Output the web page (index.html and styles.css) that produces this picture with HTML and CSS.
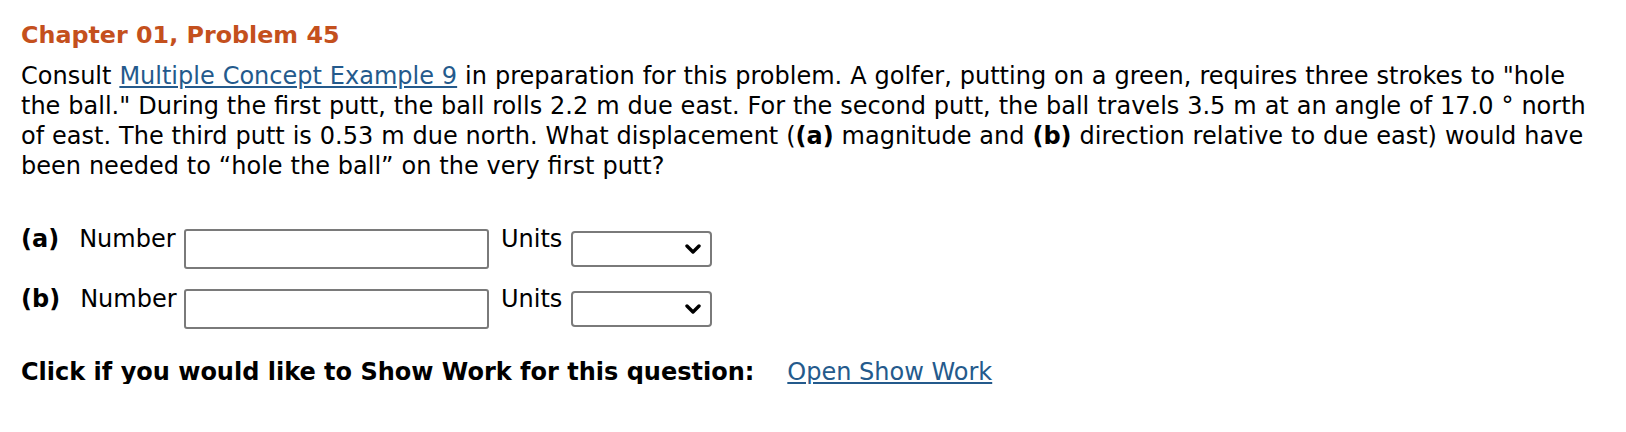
FILE: index.html
```html
<!DOCTYPE html>
<html>
<head>
<meta charset="utf-8">
<link rel="stylesheet" href="styles.css">
</head>
<body>
<div class="page">
  <h1 class="title">Chapter 01, Problem 45</h1>
  <p class="question">Consult <a class="link" href="#">Multiple Concept Example 9</a> in preparation for this problem. A golfer, putting on a green, requires three strokes to "hole the ball." During the first putt, the ball rolls 2.2 m due east. For the second putt, the ball travels 3.5 m at an angle of 17.0 ° north of east. The third putt is 0.53 m due north. What displacement (<b>(a)</b> magnitude and <b>(b)</b> direction relative to due east) would have been needed to “hole the ball” on the very first putt?</p>
  <div class="answers">
    <div class="row">
      <span class="label"><b>(a)</b><span class="word">Number</span></span>
      <span class="input"></span>
      <span class="units">Units</span>
      <span class="select"><svg class="chev" viewBox="0 0 16 10" width="16" height="10"><path d="M2 2 L8 8 L14 2" fill="none" stroke="#000" stroke-width="3.4" stroke-linecap="round" stroke-linejoin="round"/></svg></span>
    </div>
    <div class="row">
      <span class="label"><b>(b)</b><span class="word">Number</span></span>
      <span class="input"></span>
      <span class="units">Units</span>
      <span class="select"><svg class="chev" viewBox="0 0 16 10" width="16" height="10"><path d="M2 2 L8 8 L14 2" fill="none" stroke="#000" stroke-width="3.4" stroke-linecap="round" stroke-linejoin="round"/></svg></span>
    </div>
  </div>
  <div class="showwork">
    <b>Click if you would like to Show Work for this question:</b>
    <a class="link" href="#">Open Show Work</a>
  </div>
</div>
</body>
</html>
```
FILE: styles.css
```css
html, body {
  margin: 0;
  padding: 0;
  background: #fff;
}
body {
  font-family: Verdana, "DejaVu Sans", sans-serif;
  font-size: 24px;
  color: #000;
}
.page {
  padding: 21px 21px 0 21px;
  width: 1568px;
}
.title {
  margin: 0;
  font-size: 23.8px;
  font-weight: bold;
  color: #c4501d;
  line-height: 28px;
}
.question {
  margin: 12px 0 0 0;
  font-size: 24px;
  word-spacing: 0.3px;
  line-height: 30px;
}
.link {
  color: #245a8c;
  text-decoration: underline;
}
.answers {
  margin-top: 48px;
  display: flex;
  flex-direction: column;
  gap: 20px;
}
.row {
  display: flex;
  align-items: flex-start;
}
.label {
  width: 163px;
  line-height: 20px;
  display: flex;
  gap: 20px;
}
.input {
  width: 301px;
  height: 36px;
  border: 2px solid #7a7a7a;
  border-radius: 3px;
}
.units {
  margin-left: 12px;
  width: 70px;
  line-height: 20px;
}
.select {
  width: 128px;
  height: 32px;
  margin-top: 2px;
  border: 2px solid #7a7a7a;
  border-radius: 4px;
  display: flex;
  align-items: center;
  justify-content: flex-end;
  padding-right: 9px;
}
.showwork {
  margin-top: 31px;
  display: flex;
  gap: 33px;
  line-height: 24px;
}
```
